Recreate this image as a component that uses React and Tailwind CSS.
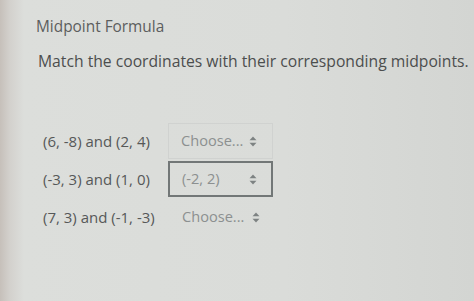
import React from "react";

function Arrows() {
  return (
    <svg width="8" height="11" viewBox="0 0 8 11" className="shrink-0">
      <path d="M4 0.5 L7.5 4.2 L0.5 4.2 Z" fill="#7d8282" />
      <path d="M4 10.5 L7.5 6.8 L0.5 6.8 Z" fill="#7d8282" />
    </svg>
  );
}

function Select({ value, placeholder, variant }) {
  const border =
    variant === "focused"
      ? "border-2 border-[#727777] pl-[12px] pr-[14px]"
      : variant === "none"
      ? "pl-[14px] pr-[13px]"
      : "border border-[#d0d2d0] pl-[12px] pr-[15px]";
  return (
    <div className={"flex h-[36px] w-[105px] items-center justify-between " + border}>
      <span className="whitespace-nowrap text-[14.6px] text-[#8c9090]">{value || placeholder}</span>
      <Arrows />
    </div>
  );
}

export default function App() {
  const rows = [
    { label: "(6, -8) and (2, 4)", value: null, variant: "default" },
    { label: "(-3, 3) and (1, 0)", value: "(-2, 2)", variant: "focused" },
    { label: "(7, 3) and (-1, -3)", value: null, variant: "none" },
  ];
  return (
    <div
      className="h-[301px] w-[474px] overflow-hidden bg-[linear-gradient(90deg,#c6c0ba_0px,#d3d1cd_10px,#dcdedb_24px,#dadcd9_60%,#d3d5d2_100%)] text-[#4e5050]"
      style={{ fontFamily: '"Open Sans", "Noto Sans", sans-serif' }}
    >
      <div className="pl-[36px] pt-[15px]">
        <div className="whitespace-nowrap text-[15.4px] leading-[24px] text-[#5c5e5e]">Midpoint Formula</div>
        <div className="mt-[10px] whitespace-nowrap pl-[2px] text-[15.7px] leading-[24px] text-[#4c4e4e]">
          Match the coordinates with their corresponding midpoints.
        </div>
        <div className="mt-[50px] flex flex-col gap-[2px] pl-[7px]">
          {rows.map((r, i) => (
            <div key={i} className="flex items-center">
              <div className="w-[125px] whitespace-nowrap text-[15px] text-[#565858]">{r.label}</div>
              <Select value={r.value} placeholder="Choose..." variant={r.variant} />
            </div>
          ))}
        </div>
      </div>
    </div>
  );
}
